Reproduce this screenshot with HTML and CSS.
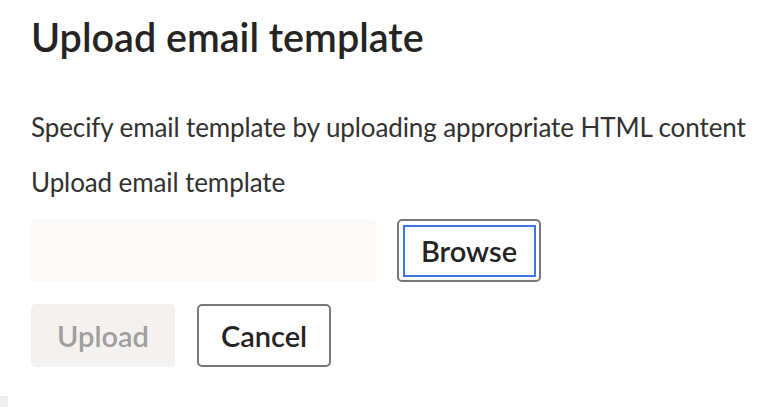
FILE: index.html
```html
<!DOCTYPE html>
<html lang="en">
<head>
<meta charset="utf-8">
<title>Upload email template</title>
<link rel="stylesheet" href="styles.css">
</head>
<body>
<div class="dialog">
  <h1 class="title">Upload email template</h1>
  <p class="desc">Specify email template by uploading appropriate HTML content</p>
  <label class="label" for="file">Upload email template</label>
  <div class="file-row">
    <div class="file-input" id="file"></div>
    <button class="btn btn-browse" type="button"><span class="focus-ring">Browse</span></button>
  </div>
  <div class="actions">
    <button class="btn btn-disabled" type="button" disabled>Upload</button>
    <button class="btn btn-default" type="button">Cancel</button>
  </div>
</div>
<div class="corner"></div>
</body>
</html>
```
FILE: styles.css
```css
html, body {
  margin: 0;
  padding: 0;
  background: #ffffff;
}
body {
  font-family: Lato, "Open Sans", sans-serif;
  color: #323130;
  width: 768px;
  height: 407px;
  overflow: hidden;
}
.dialog {
  display: flex;
  flex-direction: column;
  align-items: flex-start;
  padding: 12px 0 0 31px;
}
.title {
  margin: 0;
  font-size: 39.5px;
  line-height: 50px;
  font-weight: 600;
  color: #252423;
  white-space: nowrap;
}
.desc {
  margin: 47px 0 0 0;
  font-size: 26px;
  letter-spacing: -0.1px;
  line-height: 36px;
  white-space: nowrap;
}
.label {
  margin-top: 19px;
  font-size: 26px;
  letter-spacing: -0.1px;
  line-height: 36px;
}
.file-row {
  display: flex;
  gap: 21px;
  margin-top: 19px;
}
.file-input {
  width: 345px;
  height: 63px;
  background: #faf9f8;
  border-radius: 4px;
}
.btn {
  font-family: inherit;
  font-size: 29px;
  font-weight: 600;
  height: 63px;
  border-radius: 5px;
  padding: 0;
  margin: 0;
  box-sizing: border-box;
  color: #252423;
}
.btn-browse {
  width: 144px;
  border: 2px solid #7a7876;
  background: #ffffff;
  padding: 3.5px;
  display: flex;
}
.focus-ring {
  flex: 1;
  display: flex;
  align-items: center;
  justify-content: center;
  border: 2px solid #3d74e6;
}
.actions {
  display: flex;
  gap: 22px;
  margin-top: 22px;
}
.btn-disabled {
  width: 144px;
  border: none;
  background: #f3f2f1;
  color: #a19f9d;
}
.btn-default {
  width: 134px;
  border: 2px solid #7a7876;
  background: #ffffff;
}
.corner {
  position: fixed;
  left: 0;
  bottom: 0;
  width: 8px;
  height: 11px;
  background: #eeeeee;
}
```
